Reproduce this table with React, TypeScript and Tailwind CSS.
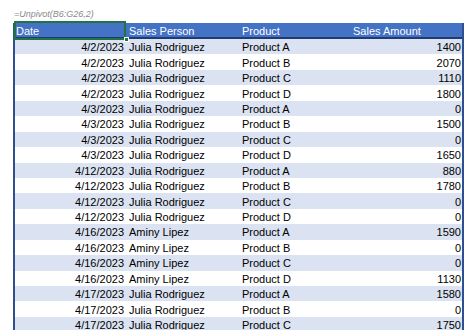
const ROWS: [string, string, string, number][] = [
  ["4/2/2023", "Julia Rodriguez", "Product A", 1400],
  ["4/2/2023", "Julia Rodriguez", "Product B", 2070],
  ["4/2/2023", "Julia Rodriguez", "Product C", 1110],
  ["4/2/2023", "Julia Rodriguez", "Product D", 1800],
  ["4/3/2023", "Julia Rodriguez", "Product A", 0],
  ["4/3/2023", "Julia Rodriguez", "Product B", 1500],
  ["4/3/2023", "Julia Rodriguez", "Product C", 0],
  ["4/3/2023", "Julia Rodriguez", "Product D", 1650],
  ["4/12/2023", "Julia Rodriguez", "Product A", 880],
  ["4/12/2023", "Julia Rodriguez", "Product B", 1780],
  ["4/12/2023", "Julia Rodriguez", "Product C", 0],
  ["4/12/2023", "Julia Rodriguez", "Product D", 0],
  ["4/16/2023", "Aminy Lipez", "Product A", 1590],
  ["4/16/2023", "Aminy Lipez", "Product B", 0],
  ["4/16/2023", "Aminy Lipez", "Product C", 0],
  ["4/16/2023", "Aminy Lipez", "Product D", 1130],
  ["4/17/2023", "Julia Rodriguez", "Product A", 1580],
  ["4/17/2023", "Julia Rodriguez", "Product B", 0],
  ["4/17/2023", "Julia Rodriguez", "Product C", 1750],
];

export default function App() {
  return (
    <div className="h-[330px] w-[474px] overflow-hidden bg-white font-['Liberation_Sans',sans-serif] text-[11px] text-black">
      <div className="h-[23px] pl-[14px] pt-[10px] text-[9px] italic leading-none text-[#8a8a8a]">
        =Unpivot(B6:G26,2)
      </div>
      <div className="ml-[13px] w-[451px] border-x-2 border-[#2f4f8f]">
        <div className="relative grid h-[16px] grid-cols-[111px_112px_113px_111px] items-center border-b-2 border-[#203a74] bg-[#4472c4] pt-[3px] leading-none text-white">
          <div className="relative pl-[1px]">
            Date
            <div className="absolute -left-[1px] -right-0 -top-[5px] -bottom-[3px] border-2 border-[#217346]" />
            <div className="absolute -bottom-[5px] -right-[3px] h-[5px] w-[5px] border border-white bg-[#217346]" />
          </div>
          <div className="pl-[3px]">Sales Person</div>
          <div className="pl-[4px]">Product</div>
          <div className="pl-[2px]">Sales Amount</div>
        </div>
        {ROWS.map((r, i) => (
          <div
            key={i}
            className={`grid h-[15.45px] grid-cols-[111px_112px_113px_111px] items-center pt-[2px] leading-none ${
              i % 2 === 0 ? "bg-[#dbe3f2]" : "bg-white"
            }`}
          >
            <div className="pr-[2px] text-right">{r[0]}</div>
            <div className="pl-[3px]">{r[1]}</div>
            <div className="pl-[4px]">{r[2]}</div>
            <div className="pr-[1px] text-right">{r[3]}</div>
          </div>
        ))}
      </div>
    </div>
  );
}
